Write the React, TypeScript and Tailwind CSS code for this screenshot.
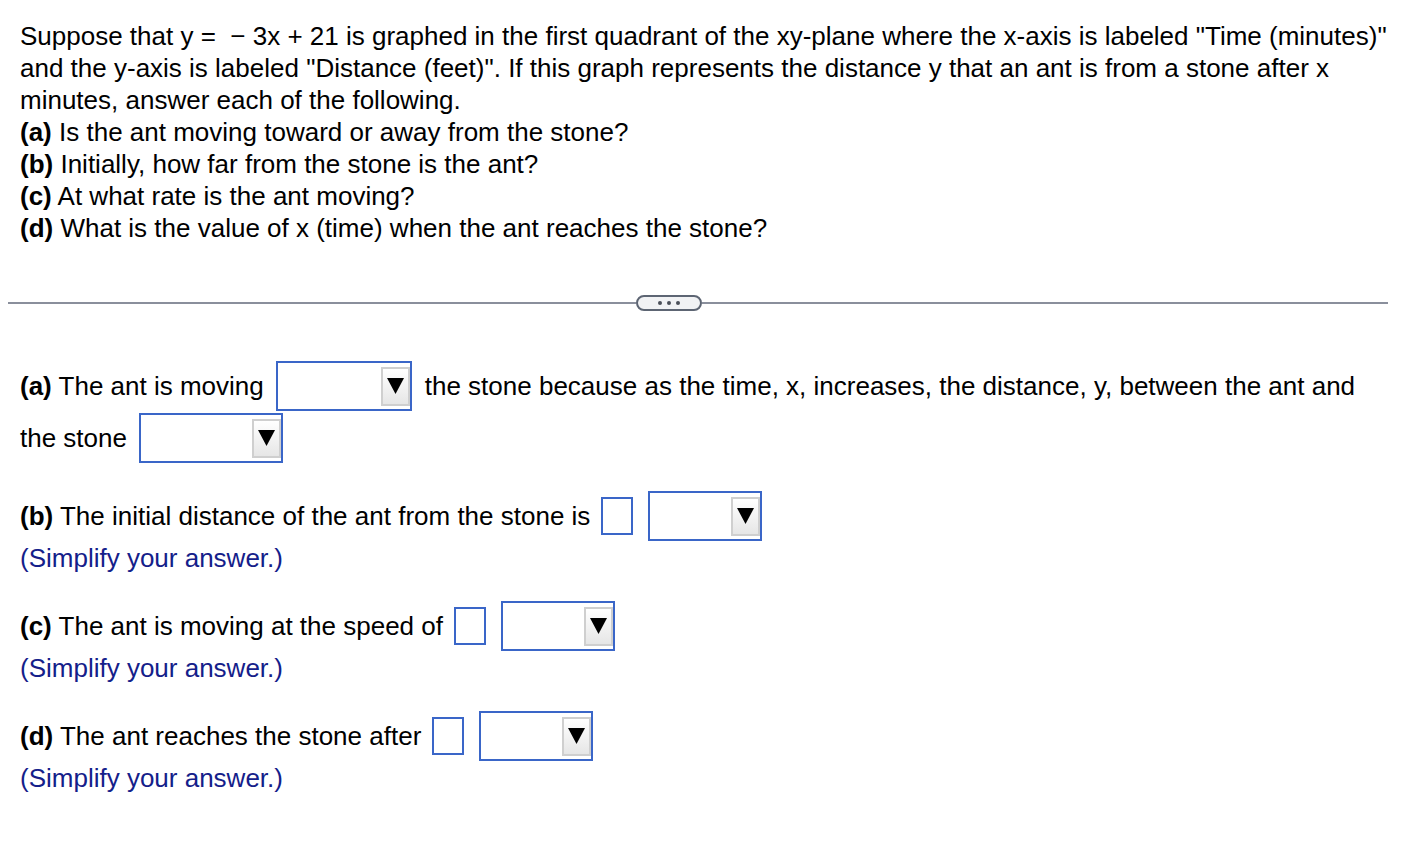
import React from "react";

function Dropdown({ w }: { w: string }) {
  return (
    <div className={`${w} h-[50px] border-2 border-[#3a66c8] bg-white flex items-center justify-end shrink-0`}>
      <div className="w-[29px] h-[39px] border-2 border-[#cfcfcf] bg-gradient-to-b from-white to-[#e6e6e6] flex items-center justify-center">
        <svg width="17" height="16" viewBox="0 0 17 16">
          <polygon points="0,0 17,0 8.5,16" fill="#000" />
        </svg>
      </div>
    </div>
  );
}

function SmallBox() {
  return <div className="w-[32px] h-[38px] border-2 border-[#3a66c8] bg-white shrink-0" />;
}

export default function App() {
  return (
    <div
      className="w-[1406px] min-h-[866px] bg-white text-black text-[26px] leading-[32px]"
      style={{ fontFamily: '"Liberation Sans", Arial, Helvetica, sans-serif' }}
    >
      <div className="pt-[20px] px-[20px]">
        <p className="whitespace-nowrap">
          Suppose that y = &nbsp;− 3x + 21 is graphed in the first quadrant of the xy-plane where the x-axis is labeled "Time (minutes)"
          <br />
          and the y-axis is labeled "Distance (feet)". If this graph represents the distance y that an ant is from a stone after x
          <br />
          minutes, answer each of the following.
        </p>
        <p>
          <b>(a)</b> Is the ant moving toward or away from the stone?
        </p>
        <p>
          <b>(b)</b> Initially, how far from the stone is the ant?
        </p>
        <p>
          <b>(c)</b> At what rate is the ant moving?
        </p>
        <p>
          <b>(d)</b> What is the value of x (time) when the ant reaches the stone?
        </p>
      </div>

      <div className="mt-[51px] ml-[8px] w-[1380px] h-[16px] flex items-center">
        <div className="w-[628px] h-[2px] bg-[#8a8f9c]" />
        <div className="w-[66px] h-[16px] rounded-full border-2 border-[#5d6573] bg-[#f1f2f4] flex items-center justify-center gap-[5px]">
          <span className="w-[4px] h-[4px] rounded-full bg-[#4a4f58]" />
          <span className="w-[4px] h-[4px] rounded-full bg-[#4a4f58]" />
          <span className="w-[4px] h-[4px] rounded-full bg-[#4a4f58]" />
        </div>
        <div className="flex-1 h-[2px] bg-[#8a8f9c]" />
      </div>

      <div className="px-[20px] mt-[49px]">
        <div className="h-[52px] flex items-center whitespace-nowrap">
          <span>
            <b>(a)</b> The ant is moving
          </span>
          <div className="ml-[12px]">
            <Dropdown w="w-[136px]" />
          </div>
          <span className="ml-[13px]">
            the stone because as the time, x, increases, the distance, y, between the ant and
          </span>
        </div>
        <div className="h-[52px] flex items-center">
          <span>the stone</span>
          <div className="ml-[12px]">
            <Dropdown w="w-[144px]" />
          </div>
        </div>

        <div className="mt-[26px] h-[52px] flex items-center whitespace-nowrap">
          <span>
            <b>(b)</b> The initial distance of the ant from the stone is
          </span>
          <div className="ml-[11px]">
            <SmallBox />
          </div>
          <div className="ml-[15px]">
            <Dropdown w="w-[114px]" />
          </div>
        </div>
        <p className="text-[#14208a]">(Simplify your answer.)</p>

        <div className="mt-[26px] h-[52px] flex items-center whitespace-nowrap">
          <span>
            <b>(c)</b> The ant is moving at the speed of
          </span>
          <div className="ml-[11px]">
            <SmallBox />
          </div>
          <div className="ml-[15px]">
            <Dropdown w="w-[114px]" />
          </div>
        </div>
        <p className="text-[#14208a]">(Simplify your answer.)</p>

        <div className="mt-[26px] h-[52px] flex items-center whitespace-nowrap">
          <span>
            <b>(d)</b> The ant reaches the stone after
          </span>
          <div className="ml-[11px]">
            <SmallBox />
          </div>
          <div className="ml-[15px]">
            <Dropdown w="w-[114px]" />
          </div>
        </div>
        <p className="text-[#14208a]">(Simplify your answer.)</p>
      </div>
    </div>
  );
}
